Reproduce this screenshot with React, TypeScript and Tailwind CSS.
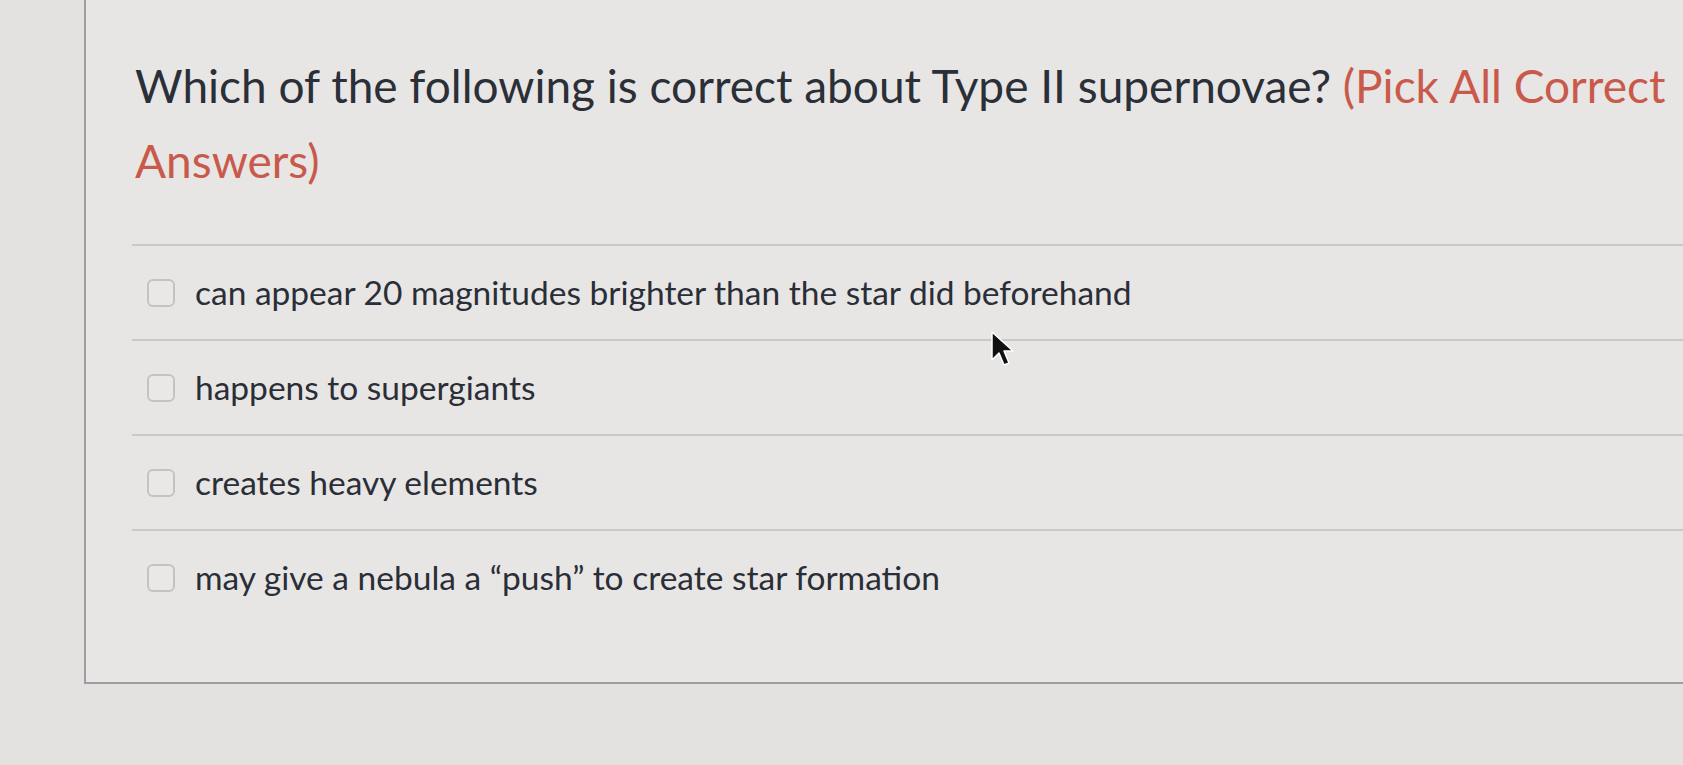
import React from "react";

const answers = [
  "can appear 20 magnitudes brighter than the star did beforehand",
  "happens to supergiants",
  "creates heavy elements",
  "may give a nebula a \u201cpush\u201d to create star formation",
];

export default function App() {
  return (
    <div
      className="relative h-[765px] w-full overflow-hidden bg-[#e3e2e0] pl-[84px]"
      style={{ fontFamily: "Lato, 'Open Sans', sans-serif" }}
    >
      <div className="h-[684px] border-b-2 border-l-2 border-[#9d9da2] bg-[#e7e6e4] pl-[46px]">
        <div className="pt-[48px] pl-[3px] pr-[10px] text-[46px] leading-[75px] text-[#2b2f38]">
          Which of the following is correct about Type II supernovae?{" "}
          <span className="text-[#c95a4b]">(Pick All Correct Answers)</span>
        </div>
        <div className="mt-[46px]">
          {answers.map((a, i) => (
            <div
              key={i}
              className="flex h-[95px] items-center border-t-2 border-[#c9c9c9]"
            >
              <div className="ml-[15px] mr-[20px] h-[28px] w-[28px] shrink-0 rounded-[6px] border-2 border-[#c3c3c3] bg-[#e9e8e6]" />
              <span className="text-[33.5px] leading-none text-[#2a2e37]">{a}</span>
            </div>
          ))}
        </div>
      </div>
      <svg
        className="absolute left-[990px] top-[330px]"
        width="24"
        height="38"
        viewBox="0 0 24 38"
      >
        <path
          d="M2 2 L2 30 L9 23 L14 35 L19 33 L14 21 L23 21 Z"
          fill="#111"
          stroke="#fff"
          strokeWidth="1.5"
          strokeLinejoin="round"
        />
      </svg>
    </div>
  );
}
